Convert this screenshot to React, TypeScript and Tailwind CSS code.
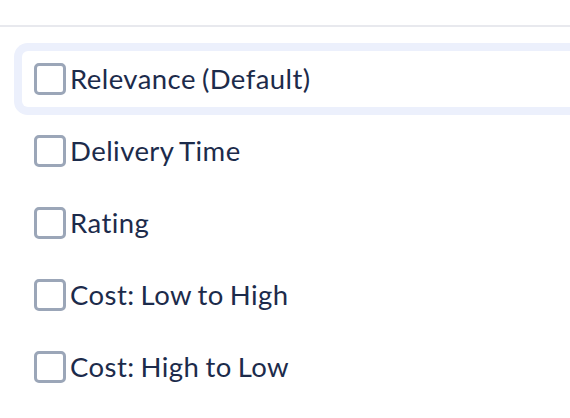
import React from "react";

const options = [
  "Relevance (Default)",
  "Delivery Time",
  "Rating",
  "Cost: Low to High",
  "Cost: High to Low",
];

export default function App() {
  return (
    <div
      className="w-[570px] h-[418px] overflow-hidden bg-white"
      style={{ fontFamily: "Lato, 'Noto Sans', sans-serif" }}
    >
      <div className="h-[25px]" />
      <div className="h-[2px] bg-[#e8e9ee]" />
      <div className="pt-[24px] pl-[22px] flex flex-col gap-[16px] w-[800px]">
        {options.map((o, i) => (
          <label
            key={o}
            className={
              "flex items-center gap-[4px] h-[56px] px-[12px] rounded-[6px] " +
              (i === 0 ? "ring-8 ring-[#ecf0fc]" : "")
            }
          >
            <span className="w-[32px] h-[32px] shrink-0 rounded-[5px] border-[3px] border-[#9ba6b8] bg-white" />
            <span className="text-[27.5px] leading-none tracking-[0.45px] [word-spacing:-1.5px] text-[#1c2b4b]">{o}</span>
          </label>
        ))}
      </div>
    </div>
  );
}
